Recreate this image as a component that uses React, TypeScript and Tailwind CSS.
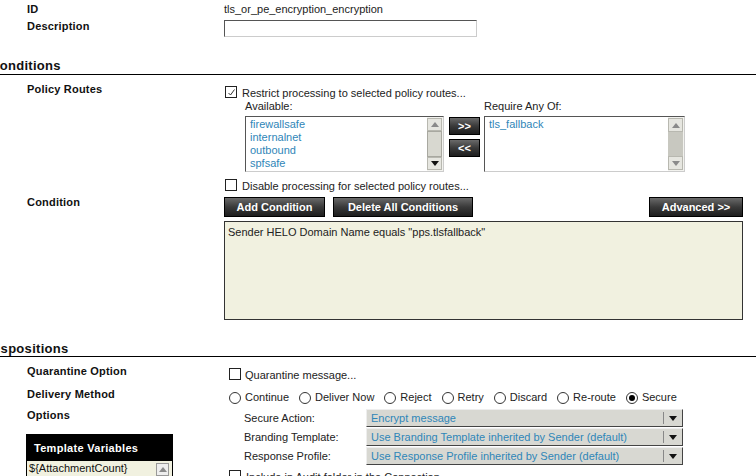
import React from "react";

const blue = "text-[#2f86b8]";

function Check({ checked }: { checked?: boolean }) {
  return (
    <span className="inline-flex h-[12px] w-[12px] shrink-0 items-center justify-center border border-[#222] bg-white">
      {checked && (
        <svg width="9" height="9" viewBox="0 0 9 9">
          <path d="M1.5 5 L3.5 7 L7.5 1.5" fill="none" stroke="#333" strokeWidth="1" />
        </svg>
      )}
    </span>
  );
}

function Radio({ label, checked }: { label: string; checked?: boolean }) {
  return (
    <span className="flex items-center gap-[4px]">
      <span className="inline-flex h-[12px] w-[12px] items-center justify-center rounded-full border border-[#333] bg-white">
        {checked && <span className="h-[6px] w-[6px] rounded-full bg-black" />}
      </span>
      <span>{label}</span>
    </span>
  );
}

function DarkButton({ children, className = "" }: { children: React.ReactNode; className?: string }) {
  return (
    <button
      type="button"
      className={
        "flex items-center justify-center border border-black bg-gradient-to-b from-[#6a6a6a] via-[#3a3a3a] to-[#1e1e1e] text-[11px] font-bold text-white " +
        className
      }
    >
      {children}
    </button>
  );
}

function Arrow({ up, dark }: { up?: boolean; dark?: boolean }) {
  return (
    <svg width="8" height="5" viewBox="0 0 8 5">
      <path d={up ? "M0 5 L4 0 L8 5 Z" : "M0 0 L8 0 L4 5 Z"} fill={dark ? "#111" : "#8a8a8a"} />
    </svg>
  );
}

function ScrollBar({ thumb }: { thumb?: boolean }) {
  return (
    <div className="flex w-[16px] flex-col bg-[#f2f2ee] py-[1px] pr-[1px]">
      <div className="flex h-[14px] items-center justify-center border border-[#b8b8b0] bg-[#e6e6e0]">
        <Arrow up />
      </div>
      {thumb ? (
        <>
          <div className="h-[28px] border border-[#a8a8a0] bg-[#d8d8d0]" />
          <div className="flex-1" />
        </>
      ) : (
        <div className="flex-1 bg-[#c8c8c0]" />
      )}
      <div className="flex h-[14px] items-center justify-center border border-[#b8b8b0] bg-[#e6e6e0]">
        <Arrow dark={thumb} />
      </div>
    </div>
  );
}

function ListBox({ items, thumb, width }: { items: string[]; thumb?: boolean; width: string }) {
  return (
    <div className={"mt-[3px] flex h-[56px] border border-[#555] border-b-[#ccc] border-r-[#ccc] bg-white " + width}>
      <div className={"flex-1 pl-[4px] pt-[1px] leading-[13px] " + blue}>
        {items.map((i) => (
          <div key={i}>{i}</div>
        ))}
      </div>
      <ScrollBar thumb={thumb} />
    </div>
  );
}

function Select({ value }: { value: string }) {
  return (
    <div className="flex h-[18px] w-[317px] items-center border border-[#eee] border-b-[#444] border-r-[#444] bg-[#d8d8d2]">
      <span className={"flex-1 pl-[4px] " + blue}>{value}</span>
      <span className="h-[12px] w-px bg-[#888]" />
      <span className="flex w-[18px] justify-center">
        <Arrow dark />
      </span>
    </div>
  );
}

function Label({ children }: { children: React.ReactNode }) {
  return <div className="text-[11px] font-bold leading-[13px] tracking-[0.2px] text-[#111]">{children}</div>;
}

export default function App() {
  return (
    <div
      className="h-[476px] w-[756px] overflow-hidden bg-white text-[11px] leading-[13px] text-[#222]"
      style={{ fontFamily: '"Liberation Sans", Arial, sans-serif' }}
    >
      {/* General */}
      <div className="grid grid-cols-[197px_1fr] pl-[27px] pt-[3px]">
        <Label>ID</Label>
        <div>tls_or_pe_encryption_encryption</div>
        <div className="mt-[4px]">
          <Label>Description</Label>
        </div>
        <div className="mt-[4px] h-[17px] w-[253px] border border-[#555] border-b-[#ccc] border-r-[#ccc] bg-white" />
      </div>

      {/* Conditions */}
      <div className="mt-[21px] ml-[-10px] border-b border-black pb-[1px] text-[13px] font-bold leading-[15px] tracking-[0.3px] text-[#111]">
        Conditions
      </div>

      <div className="grid grid-cols-[197px_1fr] pl-[27px] pt-[7px]">
        <div className="pt-[1px]">
          <Label>Policy Routes</Label>
        </div>
        <div>
          <div className="mt-[2px] flex items-center gap-[5px] pl-[1px]">
            <Check checked />
            <span className="pt-[3px]">Restrict processing to selected policy routes...</span>
          </div>
          <div className="flex pl-[21px]">
            <div>
              <div>Available:</div>
              <ListBox items={["firewallsafe", "internalnet", "outbound", "spfsafe"]} thumb width="w-[199px]" />
            </div>
            <div className="ml-[5px] flex flex-col gap-[4px] pt-[17px]">
              <DarkButton className="h-[18px] w-[31px]">&gt;&gt;</DarkButton>
              <DarkButton className="h-[18px] w-[31px]">&lt;&lt;</DarkButton>
            </div>
            <div className="ml-[4px]">
              <div>Require Any Of:</div>
              <ListBox items={["tls_fallback"]} width="w-[201px]" />
            </div>
          </div>
          <div className="mt-[4px] flex items-center gap-[5px] pl-[1px]">
            <Check />
            <span className="pt-[4px]">Disable processing for selected policy routes...</span>
          </div>
        </div>

        <div className="mt-[3px]">
          <Label>Condition</Label>
        </div>
        <div className="mt-[4px] pr-[13px]">
          <div className="flex">
            <DarkButton className="h-[20px] w-[101px]">Add Condition</DarkButton>
            <DarkButton className="ml-[8px] h-[20px] w-[140px]">Delete All Conditions</DarkButton>
            <DarkButton className="ml-auto h-[20px] w-[94px]">Advanced &gt;&gt;</DarkButton>
          </div>
          <div className="mt-[4px] h-[99px] border border-[#333] bg-[#f1f1e0] px-[3px] pt-[4px]">
            Sender HELO Domain Name equals "pps.tlsfallback"
          </div>
        </div>
      </div>

      {/* Dispositions */}
      <div className="mt-[21px] ml-[-13px] border-b border-black pb-0 text-[13px] font-bold leading-[15px] tracking-[0.3px] text-[#111]">
        Dispositions
      </div>

      <div className="flex pl-[26px] pt-[8px]">
        <div className="w-[203px] shrink-0 pl-[1px]">
          <Label>Quarantine Option</Label>
          <div className="mt-[10px]">
            <Label>Delivery Method</Label>
          </div>
          <div className="mt-[8px]">
            <Label>Options</Label>
          </div>
          <div className="ml-[-1px] mt-[12px] w-[147px] border border-black bg-black">
            <div className="flex h-[26px] items-center pl-[7px] text-[11px] font-bold tracking-[0.3px] text-white">
              Template Variables
            </div>
            <div className="flex h-[30px] bg-[#f1f1e0]">
              <div className="flex-1 pl-[2px] pt-[1px] text-[#111]">${"{"}AttachmentCount{"}"}</div>
              <div className="mr-[3px] mt-[2px] flex h-[13px] w-[13px] items-center justify-center border border-[#999] bg-[#eee]">
                <Arrow up />
              </div>
            </div>
          </div>
        </div>

        <div className="pt-[1px]">
          <div className="flex items-center gap-[4px]">
            <Check />
            <span className="pt-[3px]">Quarantine message...</span>
          </div>
          <div className="mt-[9px] flex items-center gap-[10px]">
            <Radio label="Continue" />
            <Radio label="Deliver Now" />
            <Radio label="Reject" />
            <Radio label="Retry" />
            <Radio label="Discard" />
            <Radio label="Re-route" />
            <Radio label="Secure" checked />
          </div>
          <div className="mt-[5px] grid grid-cols-[122px_auto] items-center gap-y-[1px] pl-[15px]">
            <span>Secure Action:</span>
            <Select value="Encrypt message" />
            <span>Branding Template:</span>
            <Select value="Use Branding Template inherited by Sender (default)" />
            <span>Response Profile:</span>
            <Select value="Use Response Profile inherited by Sender (default)" />
          </div>
          <div className="mt-[3px] flex items-center gap-[5px]">
            <Check />
            <span className="pt-[3px]">Include in Audit folder in the Connection...</span>
          </div>
        </div>
      </div>
    </div>
  );
}
